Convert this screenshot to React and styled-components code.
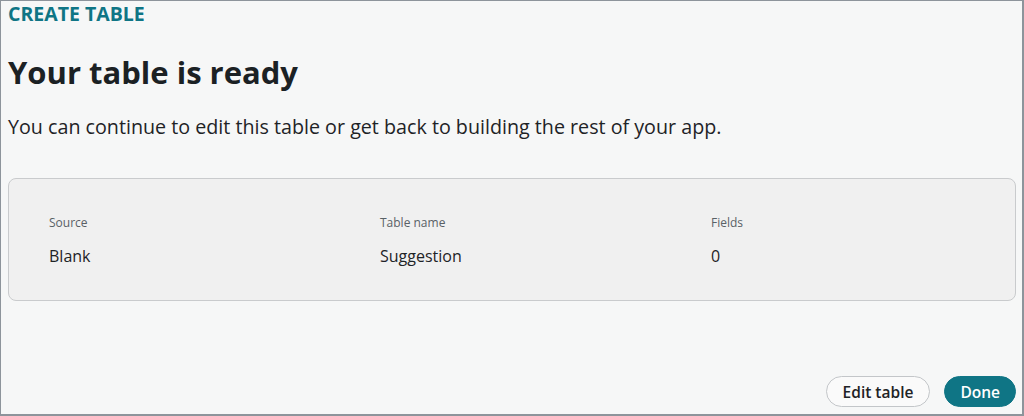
import React from "react";
import styled, { createGlobalStyle } from "styled-components";

const Global = createGlobalStyle`
  html, body { margin: 0; padding: 0; }
  body { font-family: "Open Sans", "Noto Sans", sans-serif; background: #f6f7f7; color: #1e2326; }
  * { box-sizing: border-box; }
`;

const Page = styled.div`
  height: 416px;
  display: flex;
  flex-direction: column;
  background: #f6f7f7;
  border: 1px solid #8d949b;
  border-right-width: 2px;
  border-bottom-width: 2px;
  padding: 0 6px 7px 7px;
`;

const Eyebrow = styled.div`
  font-size: 19.5px;
  font-weight: 700;
  color: #0f7585;
  line-height: 26px;
`;

const Title = styled.h1`
  margin: 25px 0 0;
  font-size: 31px;
  font-weight: 700;
  line-height: 40px;
  color: #1b2124;
`;

const Lead = styled.p`
  margin: 22px 0 0;
  font-size: 19.7px;
  line-height: 26px;
  color: #1e2326;
`;

const Card = styled.div`
  margin-top: 38px;
  height: 123px;
  border: 1px solid #c9cbcd;
  border-radius: 8px;
  background: #f0f0f0;
  display: grid;
  grid-template-columns: repeat(3, 331px);
  align-content: center;
  padding: 2px 0 0 40px;
`;

const Field = styled.div`
  display: flex;
  flex-direction: column;
  gap: 14px;
`;

const Label = styled.span`
  font-size: 12px;
  line-height: 16px;
  color: #596166;
`;

const Value = styled.span`
  font-size: 16px;
  line-height: 22px;
  color: #1e2326;
`;

const Actions = styled.div`
  margin-top: auto;
  display: flex;
  justify-content: flex-end;
  gap: 14px;
`;

const Button = styled.button`
  height: 31px;
  padding: 0 ${(p) => (p.$primary ? "15px" : "16px")};
  border-radius: 16px;
  font-family: inherit;
  font-size: 15.5px;
  font-weight: 600;
  cursor: pointer;
  border: 1px solid ${(p) => (p.$primary ? "#0f7585" : "#c3c6c9")};
  background: ${(p) => (p.$primary ? "#0f7585" : "#fafafa")};
  color: ${(p) => (p.$primary ? "#ffffff" : "#1e2326")};
`;

const fields = [
  { label: "Source", value: "Blank" },
  { label: "Table name", value: "Suggestion" },
  { label: "Fields", value: "0" },
];

export default function App() {
  return (
    <>
      <Global />
      <Page>
        <Eyebrow>CREATE TABLE</Eyebrow>
        <Title>Your table is ready</Title>
        <Lead>You can continue to edit this table or get back to building the rest of your app.</Lead>
        <Card>
          {fields.map((f) => (
            <Field key={f.label}>
              <Label>{f.label}</Label>
              <Value>{f.value}</Value>
            </Field>
          ))}
        </Card>
        <Actions>
          <Button>Edit table</Button>
          <Button $primary>Done</Button>
        </Actions>
      </Page>
    </>
  );
}
